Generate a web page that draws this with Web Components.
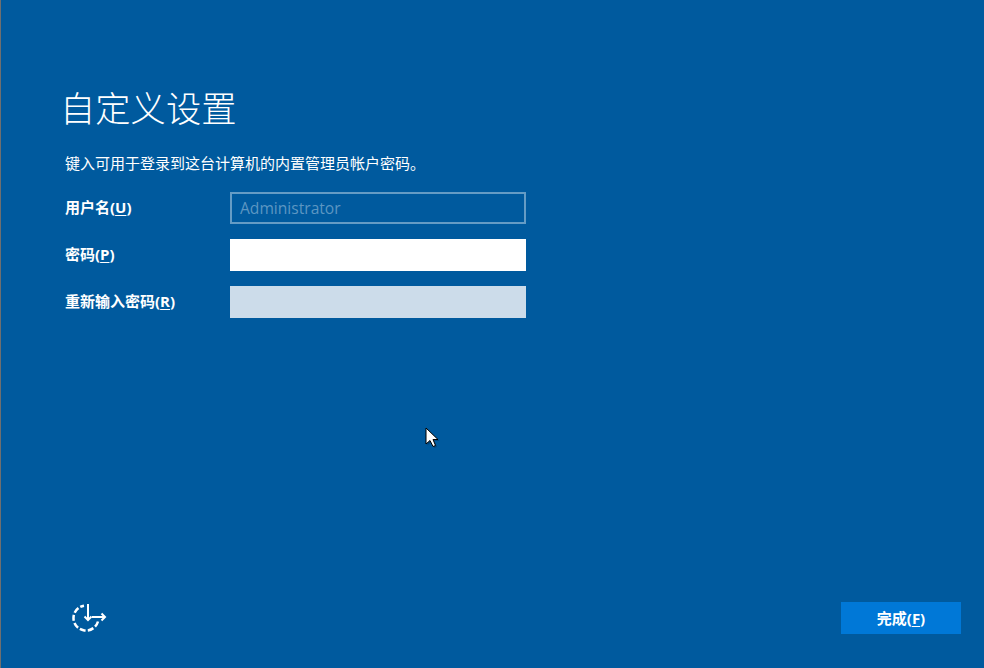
<!DOCTYPE html>
<html lang="zh-CN">
<head>
<meta charset="utf-8">
<title>自定义设置</title>
<style>
  html, body { margin: 0; height: 100%; background: #005a9e; }
  body { font-family: "Noto Sans", "Noto Sans CJK SC", sans-serif; color: #fff; overflow: hidden; }
</style>
</head>
<body>
<setup-page>
  <span slot="title">自定义设置</span>
  <span slot="hint">键入可用于登录到这台计算机的内置管理员帐户密码。</span>
  <setup-field label="用户名" key-char="U" value="Administrator" state="disabled"></setup-field>
  <setup-field label="密码" key-char="P" state="active"></setup-field>
  <setup-field label="重新输入密码" key-char="R" state="idle"></setup-field>
  <access-icon slot="footer-left"></access-icon>
  <setup-button slot="footer-right" label="完成" key-char="F"></setup-button>
</setup-page>
<mouse-pointer></mouse-pointer>

<script>
const CJK = '"Noto Sans CJK SC", "Noto Sans", sans-serif';
const MIXED = '"Open Sans", "Noto Sans CJK SC", sans-serif';

class SetupPage extends HTMLElement {
  constructor() {
    super();
    this.attachShadow({ mode: 'open' });
    this.shadowRoot.innerHTML = `
      <style>
        :host { display: flex; flex-direction: column; box-sizing: border-box; height: 668px; border-left: 1px solid #6f6f6f; padding: 84px 23px 34px 64px; }
        h1 { margin: 0 0 0 -5px; font: 300 35.3px/46px ${CJK}; color: #fff; }
        p { margin: 23px 0 19px; font: 400 15px/20px ${CJK}; color: #fff; }
        .fields { display: flex; flex-direction: column; gap: 15px; }
        footer { margin-top: auto; display: flex; justify-content: space-between; align-items: center; }
      </style>
      <h1><slot name="title"></slot></h1>
      <p><slot name="hint"></slot></p>
      <div class="fields"><slot></slot></div>
      <footer><slot name="footer-left"></slot><slot name="footer-right"></slot></footer>
    `;
  }
}

class SetupField extends HTMLElement {
  constructor() {
    super();
    this.attachShadow({ mode: 'open' });
  }

  connectedCallback() {
    const label = this.getAttribute('label');
    const key = this.getAttribute('key-char');
    const value = this.getAttribute('value') || '';
    this.shadowRoot.innerHTML = `
      <style>
        :host { display: flex; align-items: center; height: 32px; }
        label { width: 165px; flex: none; padding-bottom: 2px; font: 700 15px/20px ${MIXED}; color: #fff; }
        u { text-underline-offset: 2px; }
        .box { box-sizing: border-box; width: 296px; height: 32px; padding: 0 8px; border: 2px solid transparent; font: 400 15.6px/28px "Open Sans", "Noto Sans", sans-serif; }
        :host([state="disabled"]) .box { border-color: #659cc5; color: #5c96c2; }
        :host([state="active"]) .box { background: #fff; }
        :host([state="idle"]) .box { background: #ccdcea; }
      </style>
      <label>${label}(<u>${key}</u>)</label>
      <div class="box">${value}</div>
    `;
  }
}

class SetupButton extends HTMLElement {
  constructor() {
    super();
    this.attachShadow({ mode: 'open' });
  }

  connectedCallback() {
    this.shadowRoot.innerHTML = `
      <style>
        :host { display: flex; align-items: center; justify-content: center; width: 120px; height: 32px; background: #0078d7; color: #fff; font: 700 15px/20px ${MIXED}; }
        u { text-underline-offset: 2px; }
      </style>
      <span>${this.getAttribute('label')}(<u>${this.getAttribute('key-char')}</u>)</span>
    `;
  }
}

class AccessIcon extends HTMLElement {
  constructor() {
    super();
    this.attachShadow({ mode: 'open' });
    this.shadowRoot.innerHTML = `
      <style>
        :host { display: block; width: 36px; height: 32px; margin-left: 7px; }
        svg { display: block; }
      </style>
      <svg width="36" height="32" viewBox="0 0 36 32" fill="none" stroke="#fff" stroke-width="2">
        <path d="M26 19.5A12.5 12.5 0 1 1 12 3.7" stroke-width="2.5" stroke-dasharray="6 2.2"/>
        <path d="M16 2V18"/>
        <path d="M12.5 14.5L16 18L19.5 14.5"/>
        <path d="M20 15H33"/>
        <path d="M29.5 11.5L33 15L29.5 18.5"/>
      </svg>
    `;
  }
}

class MousePointer extends HTMLElement {
  constructor() {
    super();
    this.attachShadow({ mode: 'open' });
    this.shadowRoot.innerHTML = `
      <style>
        :host { position: absolute; left: 425px; top: 427px; width: 16px; height: 22px; }
        svg { display: block; overflow: visible; }
      </style>
      <svg width="16" height="22" viewBox="0 0 16 22">
        <path d="M2.5 2.5V18.5L6.5 15L9.5 21L12 20L9.5 14H14.5Z" fill="#003f70" opacity=".7"/>
        <path d="M1 1V17L5 13.5L8 19.5L10.5 18.5L8 12.5H13Z" fill="#fff" stroke="#000" stroke-width="1"/>
      </svg>
    `;
  }
}

customElements.define('setup-page', SetupPage);
customElements.define('setup-field', SetupField);
customElements.define('setup-button', SetupButton);
customElements.define('access-icon', AccessIcon);
customElements.define('mouse-pointer', MousePointer);
</script>
</body>
</html>
